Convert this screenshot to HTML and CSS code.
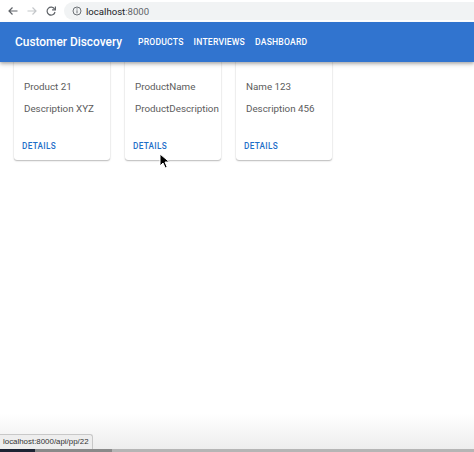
FILE: index.html
```html
<!DOCTYPE html>
<html>
<head>
<meta charset="utf-8">
<link rel="stylesheet" href="styles.css">
</head>
<body>
<div class="chrome">
  <div class="navicons">
    <svg class="ic" width="12" height="12" viewBox="0 0 12 12"><path d="M10.5 6H2M5.5 2.5L2 6l3.5 3.5" fill="none" stroke="#5f6368" stroke-width="1.2"/></svg>
    <svg class="ic" width="12" height="12" viewBox="0 0 12 12"><path d="M1.5 6H10M6.5 2.5L10 6l-3.5 3.5" fill="none" stroke="#c4c7ca" stroke-width="1.2"/></svg>
    <svg class="ic" width="12" height="12" viewBox="0 0 12 12"><path d="M9.6 4.2A4 4 0 1 0 10 7" fill="none" stroke="#5f6368" stroke-width="1.2"/><path d="M10.4 1.6v3.3H7.1" fill="none" stroke="#5f6368" stroke-width="1.2"/></svg>
  </div>
  <div class="url">
    <svg width="10" height="10" viewBox="0 0 10 10"><circle cx="5" cy="5" r="4" fill="none" stroke="#5f6368" stroke-width="0.9"/><path d="M5 4.3v3" stroke="#5f6368" stroke-width="0.9"/><circle cx="5" cy="2.9" r="0.55" fill="#5f6368"/></svg>
    <span class="host">localhost</span><span class="port">:8000</span>
  </div>
</div>
<header class="appbar">
  <div class="title">Customer Discovery</div>
  <nav class="nav">
    <span>PRODUCTS</span>
    <span>INTERVIEWS</span>
    <span>DASHBOARD</span>
  </nav>
</header>
<main class="cards">
  <div class="card">
    <div class="card-body">
      <p>Product 21</p>
      <p>Description XYZ</p>
    </div>
    <div class="card-actions"><span class="btn">DETAILS</span></div>
  </div>
  <div class="card">
    <div class="card-body">
      <p>ProductName</p>
      <p>ProductDescription</p>
    </div>
    <div class="card-actions"><span class="btn">DETAILS</span></div>
  </div>
  <div class="card">
    <div class="card-body">
      <p>Name 123</p>
      <p>Description 456</p>
    </div>
    <div class="card-actions"><span class="btn">DETAILS</span></div>
  </div>
</main>
<div class="dock"><span class="dock-dark"></span><span class="dock-mid"></span><span class="dock-rest"></span></div>
<div class="fade"></div>
<div class="status">localhost:8000/api/pp/22</div>
<svg class="cursor" width="14" height="18" viewBox="0 0 14 18"><path d="M1 1v12l3-3 2.2 5 2-0.9L6 9h4.5z" fill="#000" stroke="#fff" stroke-width="1"/></svg>
</body>
</html>
```
FILE: styles.css
```css
* { box-sizing: border-box; }
html, body { margin: 0; padding: 0; }
body {
  width: 474px;
  height: 452px;
  overflow: hidden;
  font-family: Roboto, "Liberation Sans", Arial, sans-serif;
  background: #fff;
  display: flex;
  flex-direction: column;
  position: relative;
}
.chrome {
  height: 22px;
  flex: none;
  display: flex;
  align-items: center;
  background: #fff;
}
.navicons {
  display: flex;
  gap: 7px;
  padding-left: 7px;
  width: 64px;
}
.ic { display: block; }
.url {
  flex: 1;
  height: 18px;
  background: #f1f3f4;
  border-radius: 9px 0 0 9px;
  display: flex;
  align-items: center;
  padding-left: 8px;
  gap: 4px;
  font-size: 9.6px;
}
.host { color: #202124; }
.port { color: #5f6368; margin-left: -4px; }
.appbar {
  height: 40px;
  flex: none;
  background: #3174cf;
  color: #fff;
  display: flex;
  align-items: center;
  padding-left: 15px;
  position: relative;
  z-index: 1;
  box-shadow: 0 1.5px 3px rgba(0,0,0,0.25), 0 3px 5px rgba(0,0,0,0.12);
}
.title {
  font-size: 11.9px;
  font-weight: 500;
}
.nav {
  display: flex;
  gap: 10px;
  margin-left: 16px;
  font-size: 8.6px;
  font-weight: 500;
  letter-spacing: 0.2px;
}
.cards {
  flex: 1;
  display: flex;
  align-items: flex-start;
  gap: 15px;
  padding-left: 14px;
  margin-top: -6px;
}
.card {
  width: 96px;
  background: #fff;
  border-radius: 3px;
  box-shadow: 0 1px 2px rgba(0,0,0,0.18), 0 1px 1px rgba(0,0,0,0.1), 0 0 1px rgba(0,0,0,0.12);
}
.card-body {
  padding: 23px 10px 15px;
}
.card-body p {
  margin: 0;
  font-size: 9.8px;
  line-height: 15px;
  color: #5c5c5c;
  white-space: nowrap;
}
.card-body p + p { margin-top: 7px; }
.card-actions {
  padding: 5px;
  height: 29px;
  display: flex;
  align-items: center;
}
.btn {
  padding: 0 3px;
  font-size: 8.2px;
  font-weight: 500;
  color: #1f6fc8;
  letter-spacing: 0.3px;
  margin-top: 1px;
}
.dock {
  height: 3px;
  flex: none;
  display: flex;
}
.dock-dark { width: 35px; background: #1d2333; }
.dock-mid { width: 77px; background: #8a8a8a; }
.dock-rest { flex: 1; background: #b5b5b5; }
.fade {
  position: absolute;
  left: 0;
  right: 0;
  bottom: 3px;
  height: 36px;
  background: linear-gradient(to bottom, rgba(0,0,0,0), rgba(0,0,0,0.07));
  pointer-events: none;
}
.status {
  position: absolute;
  left: 0;
  bottom: 3px;
  height: 15px;
  padding: 0 3px;
  background: #eeeeee;
  border: 1px solid #c8c8c8;
  border-left: none;
  border-bottom: none;
  border-radius: 0 3px 0 0;
  font-size: 7.9px;
  line-height: 14px;
  color: #333;
  font-family: "Liberation Sans", Arial, sans-serif;
}
.cursor {
  position: absolute;
  left: 159px;
  top: 153px;
}
```
